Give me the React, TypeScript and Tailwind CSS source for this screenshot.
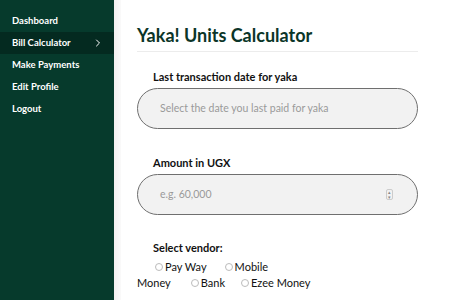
import { ChevronRight } from 'lucide-react'

const navItems = ['Dashboard', 'Bill Calculator', 'Make Payments', 'Edit Profile', 'Logout']

function Radio({ label, className = '' }: { label: string; className?: string }) {
  return (
    <label className={`inline-flex items-center gap-[2px] ${className}`}>
      <span className="inline-block w-[8px] h-[8px] rounded-full border border-[#bbb] bg-white" />
      <span>{label}</span>
    </label>
  )
}

export default function App() {
  return (
    <div className="flex h-[300px] w-[450px] overflow-hidden bg-white" style={{ fontFamily: 'Lato, "Open Sans", sans-serif' }}>
      <aside className="w-[114px] shrink-0 bg-[#063a2c] pt-[10px]">
        <ul className="text-[9.5px] font-bold text-white">
          {navItems.map((item) => (
            <li
              key={item}
              className={`flex h-[22px] items-center justify-between pl-[12px] pr-[10px] ${item === 'Bill Calculator' ? 'bg-[#042a20]' : ''}`}
            >
              <span>{item}</span>
              {item === 'Bill Calculator' && <ChevronRight className="w-[12px] h-[12px]" strokeWidth={2} />}
            </li>
          ))}
        </ul>
      </aside>
      <div className="w-[7px] shrink-0 bg-gradient-to-r from-[#f4f0f0] to-[#fafafa]" />
      <main className="flex-1 pl-[16px] pr-[32px] pt-[22px] text-[#111]">
        <h1 className="text-[18px] font-bold leading-[26px] text-[#0b3528]">Yaka! Units Calculator</h1>
        <div className="mt-[3px] h-px bg-[#ececec]" />

        <p className="mt-[18px] pl-[16px] text-[11px] font-bold leading-[14px]">Last transaction date for yaka</p>
        <div className="mt-[4px] flex h-[41px] items-center rounded-full border border-[#6f6f6f] bg-[#f2f2f2] pl-[22px] text-[10.5px] text-[#9a9a9a]">
          Select the date you last paid for yaka
        </div>

        <p className="mt-[27px] pl-[16px] text-[11px] font-bold leading-[14px]">Amount in UGX</p>
        <div className="mt-[4px] flex h-[41px] items-center justify-between rounded-full border border-[#6f6f6f] bg-[#f2f2f2] pl-[22px] pr-[24px] text-[10.5px] text-[#9a9a9a]">
          <span>e.g. 60,000</span>
          <span className="flex h-[11px] w-[7px] flex-col items-center justify-center rounded-[2px] border border-[#ccc] text-[5px] leading-[5px] text-[#888]">
            <span>▴</span>
            <span>▾</span>
          </span>
        </div>

        <p className="mt-[26px] pl-[16px] text-[11px] font-bold leading-[14px]">Select vendor:</p>
        <div className="mt-[4px] text-[11px] leading-[16px]">
          <div className="pl-[18px]">
            <Radio label="Pay Way" />
            <Radio label="Mobile" className="ml-[18px]" />
          </div>
          <div>
            <span>Money</span>
            <Radio label="Bank" className="ml-[20px]" />
            <Radio label="Ezee Money" className="ml-[16px]" />
          </div>
        </div>
      </main>
    </div>
  )
}
